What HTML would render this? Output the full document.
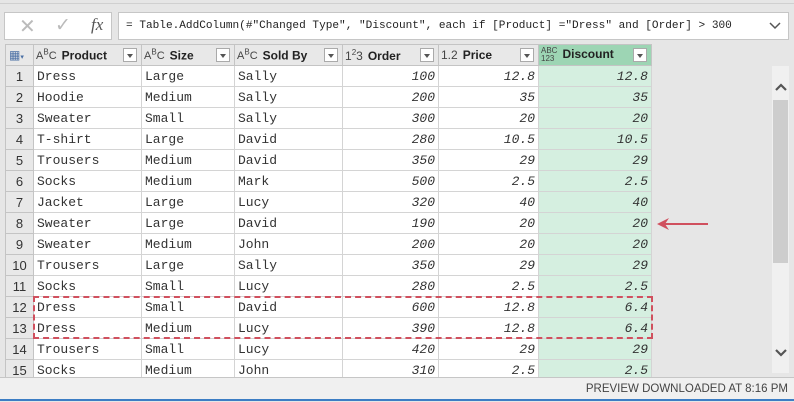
<!DOCTYPE html>
<html><head><style>
*{margin:0;padding:0;box-sizing:border-box}
body{width:794px;height:402px;background:#e6e6e6;position:relative;overflow:hidden;font-family:"Liberation Sans",sans-serif}
.abs{position:absolute}
.fx{left:4px;top:12px;width:108px;height:28px;background:#fff;border:1px solid #c6c6c6}
.fb{left:118px;top:12px;width:671px;height:28px;background:#fff;border:1px solid #c6c6c6;font-family:"Liberation Mono",monospace;font-size:11.1px;line-height:26px;padding-left:7px;color:#222;white-space:nowrap;overflow:hidden}
table{position:absolute;left:5px;top:44px;border-collapse:collapse;table-layout:fixed}
td,th{height:21px;border:1px solid #d4d4d4;overflow:hidden;white-space:nowrap}
th{background:#e8e8e8;font-weight:bold;font-size:12px;text-align:left;color:#222;border-color:#c4c4c4;position:relative;height:21px}
th .dd{position:absolute;right:4px;top:3px;width:14px;height:14px;background:#fff;border:1px solid #aaa}
th .dd:after{content:"";position:absolute;left:3px;top:5px;border:3px solid transparent;border-top:4px solid #555}
th .ic{font-weight:normal;font-size:11px;color:#444;margin:0 5px 0 2px}
td{background:#fff;font-family:"Liberation Mono",monospace;font-size:13px;color:#333;padding:0 3px}
td.n{background:#e8e8e8;font-family:"Liberation Sans",sans-serif;text-align:center;color:#333;font-size:13px;border-color:#c4c4c4}
td.r{text-align:right;font-style:italic}
td.g{background:#d5efe0}
th.g{background:#9dd5b4}
</style></head><body>
<div class="abs" style="left:0;top:3px;width:794px;height:1px;background:#d0d0d0"></div>
<div class="abs fx"><span class="abs" style="left:14px;top:1px;font-size:20px;color:#bbb">✕</span><span class="abs" style="left:50px;top:1px;font-size:19px;color:#bbb">✓</span><span class="abs" style="left:86px;top:2px;font-family:'Liberation Serif',serif;font-style:italic;font-size:17px;color:#555">fx</span></div>
<div class="abs fb">= Table.AddColumn(#"Changed Type", "Discount", each if [Product] ="Dress" and [Order] &gt; 300</div>
<svg class="abs" style="left:769px;top:22px" width="12" height="8"><path d="M1 1 L6 6 L11 1" stroke="#555" stroke-width="1.5" fill="none"/></svg>
<table>
<colgroup><col style="width:28px"><col style="width:108px"><col style="width:93px"><col style="width:108px"><col style="width:96px"><col style="width:100px"><col style="width:113px"></colgroup>
<tr><th style="font-weight:normal;color:#4a6fa5;font-size:12px;padding-left:3px">▦<span style="font-size:7px">▾</span></th>
<th><span class="ic">A<sup style="font-size:8px">B</sup>C</span>Product<span class="dd"></span></th>
<th><span class="ic">A<sup style="font-size:8px">B</sup>C</span>Size<span class="dd"></span></th>
<th><span class="ic">A<sup style="font-size:8px">B</sup>C</span>Sold By<span class="dd"></span></th>
<th><span class="ic" style="font-size:12px">1<sup style="font-size:8px">2</sup>3</span>Order<span class="dd"></span></th>
<th><span class="ic" style="font-size:12px">1.2</span>Price<span class="dd"></span></th>
<th class="g"><span class="ic" style="font-size:8px;line-height:8px;display:inline-block;vertical-align:middle">ABC<br>123</span>Discount<span class="dd"></span></th></tr>
<tr><td class="n">1</td><td>Dress</td><td>Large</td><td>Sally</td><td class="r">100</td><td class="r">12.8</td><td class="r g">12.8</td></tr>
<tr><td class="n">2</td><td>Hoodie</td><td>Medium</td><td>Sally</td><td class="r">200</td><td class="r">35</td><td class="r g">35</td></tr>
<tr><td class="n">3</td><td>Sweater</td><td>Small</td><td>Sally</td><td class="r">300</td><td class="r">20</td><td class="r g">20</td></tr>
<tr><td class="n">4</td><td>T-shirt</td><td>Large</td><td>David</td><td class="r">280</td><td class="r">10.5</td><td class="r g">10.5</td></tr>
<tr><td class="n">5</td><td>Trousers</td><td>Medium</td><td>David</td><td class="r">350</td><td class="r">29</td><td class="r g">29</td></tr>
<tr><td class="n">6</td><td>Socks</td><td>Medium</td><td>Mark</td><td class="r">500</td><td class="r">2.5</td><td class="r g">2.5</td></tr>
<tr><td class="n">7</td><td>Jacket</td><td>Large</td><td>Lucy</td><td class="r">320</td><td class="r">40</td><td class="r g">40</td></tr>
<tr><td class="n">8</td><td>Sweater</td><td>Large</td><td>David</td><td class="r">190</td><td class="r">20</td><td class="r g">20</td></tr>
<tr><td class="n">9</td><td>Sweater</td><td>Medium</td><td>John</td><td class="r">200</td><td class="r">20</td><td class="r g">20</td></tr>
<tr><td class="n">10</td><td>Trousers</td><td>Large</td><td>Sally</td><td class="r">350</td><td class="r">29</td><td class="r g">29</td></tr>
<tr><td class="n">11</td><td>Socks</td><td>Small</td><td>Lucy</td><td class="r">280</td><td class="r">2.5</td><td class="r g">2.5</td></tr>
<tr><td class="n">12</td><td>Dress</td><td>Small</td><td>David</td><td class="r">600</td><td class="r">12.8</td><td class="r g">6.4</td></tr>
<tr><td class="n">13</td><td>Dress</td><td>Medium</td><td>Lucy</td><td class="r">390</td><td class="r">12.8</td><td class="r g">6.4</td></tr>
<tr><td class="n">14</td><td>Trousers</td><td>Small</td><td>Lucy</td><td class="r">420</td><td class="r">29</td><td class="r g">29</td></tr>
<tr><td class="n">15</td><td>Socks</td><td>Medium</td><td>John</td><td class="r">310</td><td class="r">2.5</td><td class="r g">2.5</td></tr>
</table>
<div class="abs" style="left:33px;top:296px;width:620px;height:43px;border:2px dashed #d0505e"></div>
<svg class="abs" style="left:655px;top:216px" width="56" height="16"><line x1="8" y1="8" x2="53" y2="8" stroke="#d0505e" stroke-width="2"/><path d="M2 8 L14 2 L10 8 L14 14 Z" fill="#d0505e"/></svg>
<div class="abs" style="left:772px;top:66px;width:17px;height:307px;background:#f0f0f0"></div>
<div class="abs" style="left:773px;top:100px;width:15px;height:163px;background:#cdcdcd"></div>
<svg class="abs" style="left:774px;top:82px" width="14" height="10"><path d="M2 8 L7 3 L12 8" stroke="#555" stroke-width="2.2" fill="none"/></svg>
<svg class="abs" style="left:774px;top:348px" width="14" height="10"><path d="M2 2 L7 7 L12 2" stroke="#555" stroke-width="2.2" fill="none"/></svg>
<div class="abs" style="left:0;top:377px;width:794px;height:22px;background:#f0f0f0;border-top:1px solid #c6c6c6"></div>
<div class="abs" style="right:6px;top:383px;font-size:11.5px;color:#444">PREVIEW DOWNLOADED AT 8:16 PM</div>
<div class="abs" style="left:0;top:399px;width:794px;height:2px;background:#3c7dc4"></div>
</body></html>
